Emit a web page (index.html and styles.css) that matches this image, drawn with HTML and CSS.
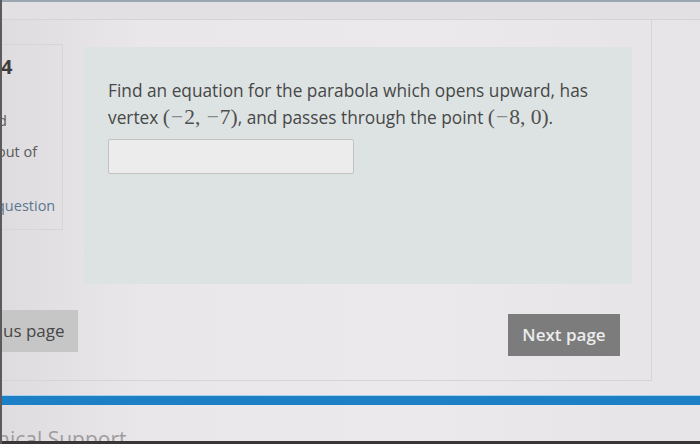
FILE: index.html
```html
<!DOCTYPE html>
<html>
<head>
<meta charset="utf-8">
<link rel="stylesheet" href="styles.css">
</head>
<body>
<div class="screen">
  <div class="topline"></div>
  <div class="main">
    <div class="row">
      <div class="info">
        <div class="qno">4</div>
        <div class="state">d</div>
        <div class="grade">out of</div>
        <div class="flag">question</div>
      </div>
      <div class="question">
        <p class="qtext">Find an equation for the parabola which opens upward, has vertex <span class="math">(<span class="minus">−</span>2, <span class="minus">−</span>7)</span>, and passes through the point <span class="math">(<span class="minus">−</span>8, 0)</span>.</p>
        <div class="answer"></div>
      </div>
    </div>
    <div class="nav">
      <div class="btn prev">us page</div>
      <div class="btn next">Next page</div>
    </div>
  </div>
  <div class="bluebar"></div>
  <div class="footer">nical Support</div>
  <div class="bottomedge"></div>
</div>
</body>
</html>
```

FILE: styles.css
```css
html, body {
  margin: 0;
  padding: 0;
}
body {
  width: 700px;
  height: 444px;
  overflow: hidden;
  background: #e8e6e8;
  font-family: "Open Sans", "Noto Sans", sans-serif;
  color: #474747;
}
.screen {
  width: 700px;
  height: 444px;
  display: flex;
  flex-direction: column;
  background: linear-gradient(90deg, #dedcde 0%, #e9e7e9 20%, #ebe9eb 60%, #e6e4e6 100%);
  border-left: 2px solid #5c5a5c;
  box-sizing: border-box;
  overflow: hidden;
}
.topline {
  height: 20px;
  flex: none;
  border-bottom: 1px solid #d6d4d6;
  background: #e2e0e2;
  box-sizing: border-box;
  border-top: 2px solid #9aa6b0;
}
.main {
  width: 650px;
  height: 361px;
  flex: none;
  border-right: 1px solid #d6d4d6;
  border-bottom: 1px solid #d6d4d6;
  box-sizing: border-box;
  display: flex;
  flex-direction: column;
}
.row {
  display: flex;
  align-items: flex-start;
  padding-top: 24px;
}
.info {
  width: 61px;
  height: 186px;
  border: 1px solid #d6d4d6;
  border-left: none;
  box-sizing: border-box;
  font-size: 14.5px;
  overflow: hidden;
}
.qno {
  font-size: 20px;
  font-weight: 700;
  color: #3d3d3d;
  line-height: 20px;
  margin-top: 12px;
  margin-left: -1px;
}
.state {
  margin-top: 36px;
  margin-left: -4px;
  color: #5a5a5a;
  line-height: 16px;
}
.grade {
  margin-top: 15px;
  margin-left: -5px;
  color: #5a5a5a;
  line-height: 16px;
}
.flag {
  margin-top: 38px;
  margin-left: -6px;
  color: #5d7892;
  line-height: 16px;
}
.question {
  margin-left: 21px;
  margin-top: 3px;
  width: 548px;
  height: 237px;
  background: #dde3e3;
  box-sizing: border-box;
  padding: 31px 22px 0 24px;
}
.qtext {
  margin: 0;
  font-size: 17.3px;
  line-height: 26px;
  color: #474747;
  width: 500px;
}
.math {
  font-family: "Liberation Serif", "Times New Roman", serif;
  font-size: 21.5px;
  color: #505050;
}
.minus {
  color: #8a8a8a;
  padding: 0 1px;
}
.answer {
  margin-top: 8px;
  width: 246px;
  height: 35px;
  background: #ececec;
  border: 1px solid #c2c2c2;
  border-radius: 2px;
  box-sizing: border-box;
}
.nav {
  display: flex;
  justify-content: space-between;
  align-items: flex-start;
  margin-top: 26px;
  padding-right: 31px;
}
.btn {
  height: 42px;
  line-height: 42px;
  font-size: 17px;
  box-sizing: border-box;
}
.prev {
  width: 76px;
  background: #c6c6c6;
  color: #474747;
  padding-left: 1px;
}
.next {
  width: 112px;
  background: #7c7c7c;
  color: #ececec;
  text-align: center;
  font-weight: 600;
  margin-top: 4px;
}
.bluebar {
  flex: none;
  margin-top: 14px;
  height: 10px;
  background: #1d80c6;
  border-top: 1px solid #a8d0ec;
  box-sizing: border-box;
}
.footer {
  flex: none;
  margin-top: 22px;
  height: 14px;
  font-size: 21px;
  line-height: 24px;
  color: #9e9c9e;
  margin-left: -5px;
  overflow: hidden;
}
.bottomedge {
  flex: none;
  height: 4px;
  background: #3a3536;
}
```
